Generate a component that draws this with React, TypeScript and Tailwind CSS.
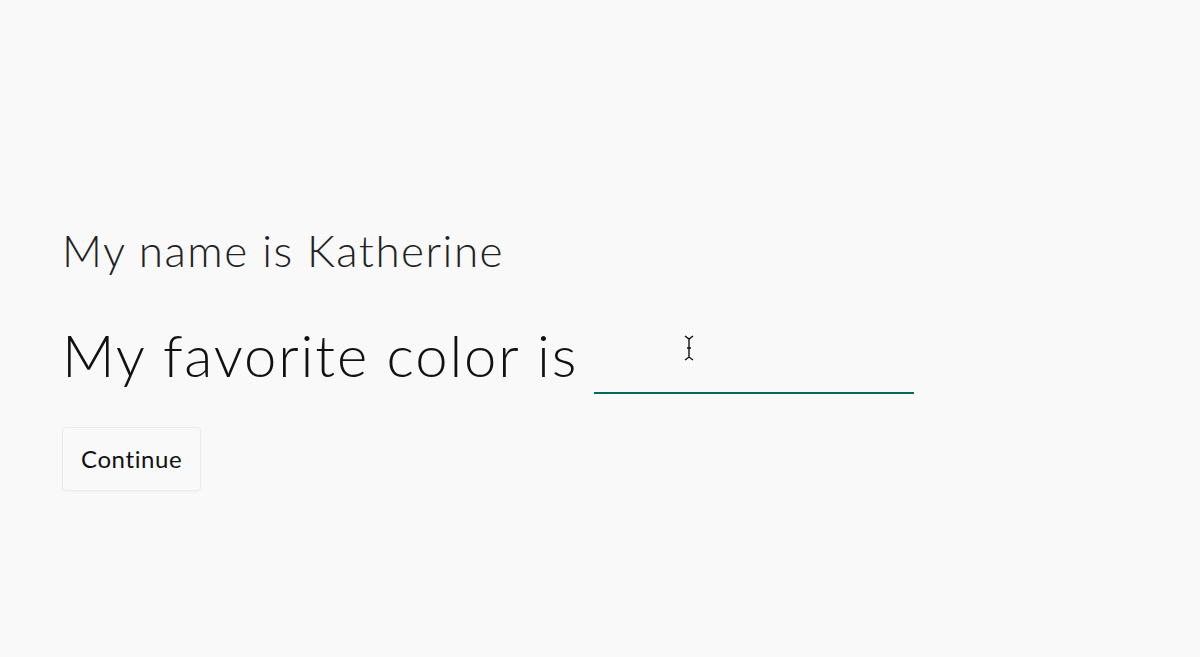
export default function App() {
    return (
        <div className="min-h-[657px] w-full bg-[#f9f9f9] text-[#111] font-['Lato','Liberation_Sans',sans-serif]">
            <div className="flex flex-col items-start pl-[62px] pt-[222px]">
                <p className="text-[44px] font-light leading-[56px] tracking-[1.5px] text-[#222]">My name is Katherine</p>

                <div className="mt-[42px] flex items-end gap-[16px]">
                    <p className="text-[58px] font-light leading-[70px] tracking-[1.85px]">My favorite color is</p>
                    <div className="relative mb-[-4px] h-[50px] w-[320px] border-b-2 border-[#00695c]">
                        {/* mouse cursor over the field */}
                        <svg className="absolute left-[90px] top-[-9px]" width="10" height="26" viewBox="0 0 10 26" fill="none" stroke="#111" strokeWidth="1.4">
                            <path d="M1 1 L5 4 L9 1 M5 4 V22 M1 25 L5 22 L9 25 M3 13 H7" />
                        </svg>
                    </div>
                </div>

                <button className="mt-[37px] rounded-[4px] border border-[#ececec] bg-[#f9f9f9] px-[18px] py-[14px] text-[24px] leading-[34px] tracking-[0.6px] text-[#111] shadow-[0_1px_2px_rgba(0,0,0,0.04)]">
                    Continue
                </button>
            </div>
        </div>
    );
}
